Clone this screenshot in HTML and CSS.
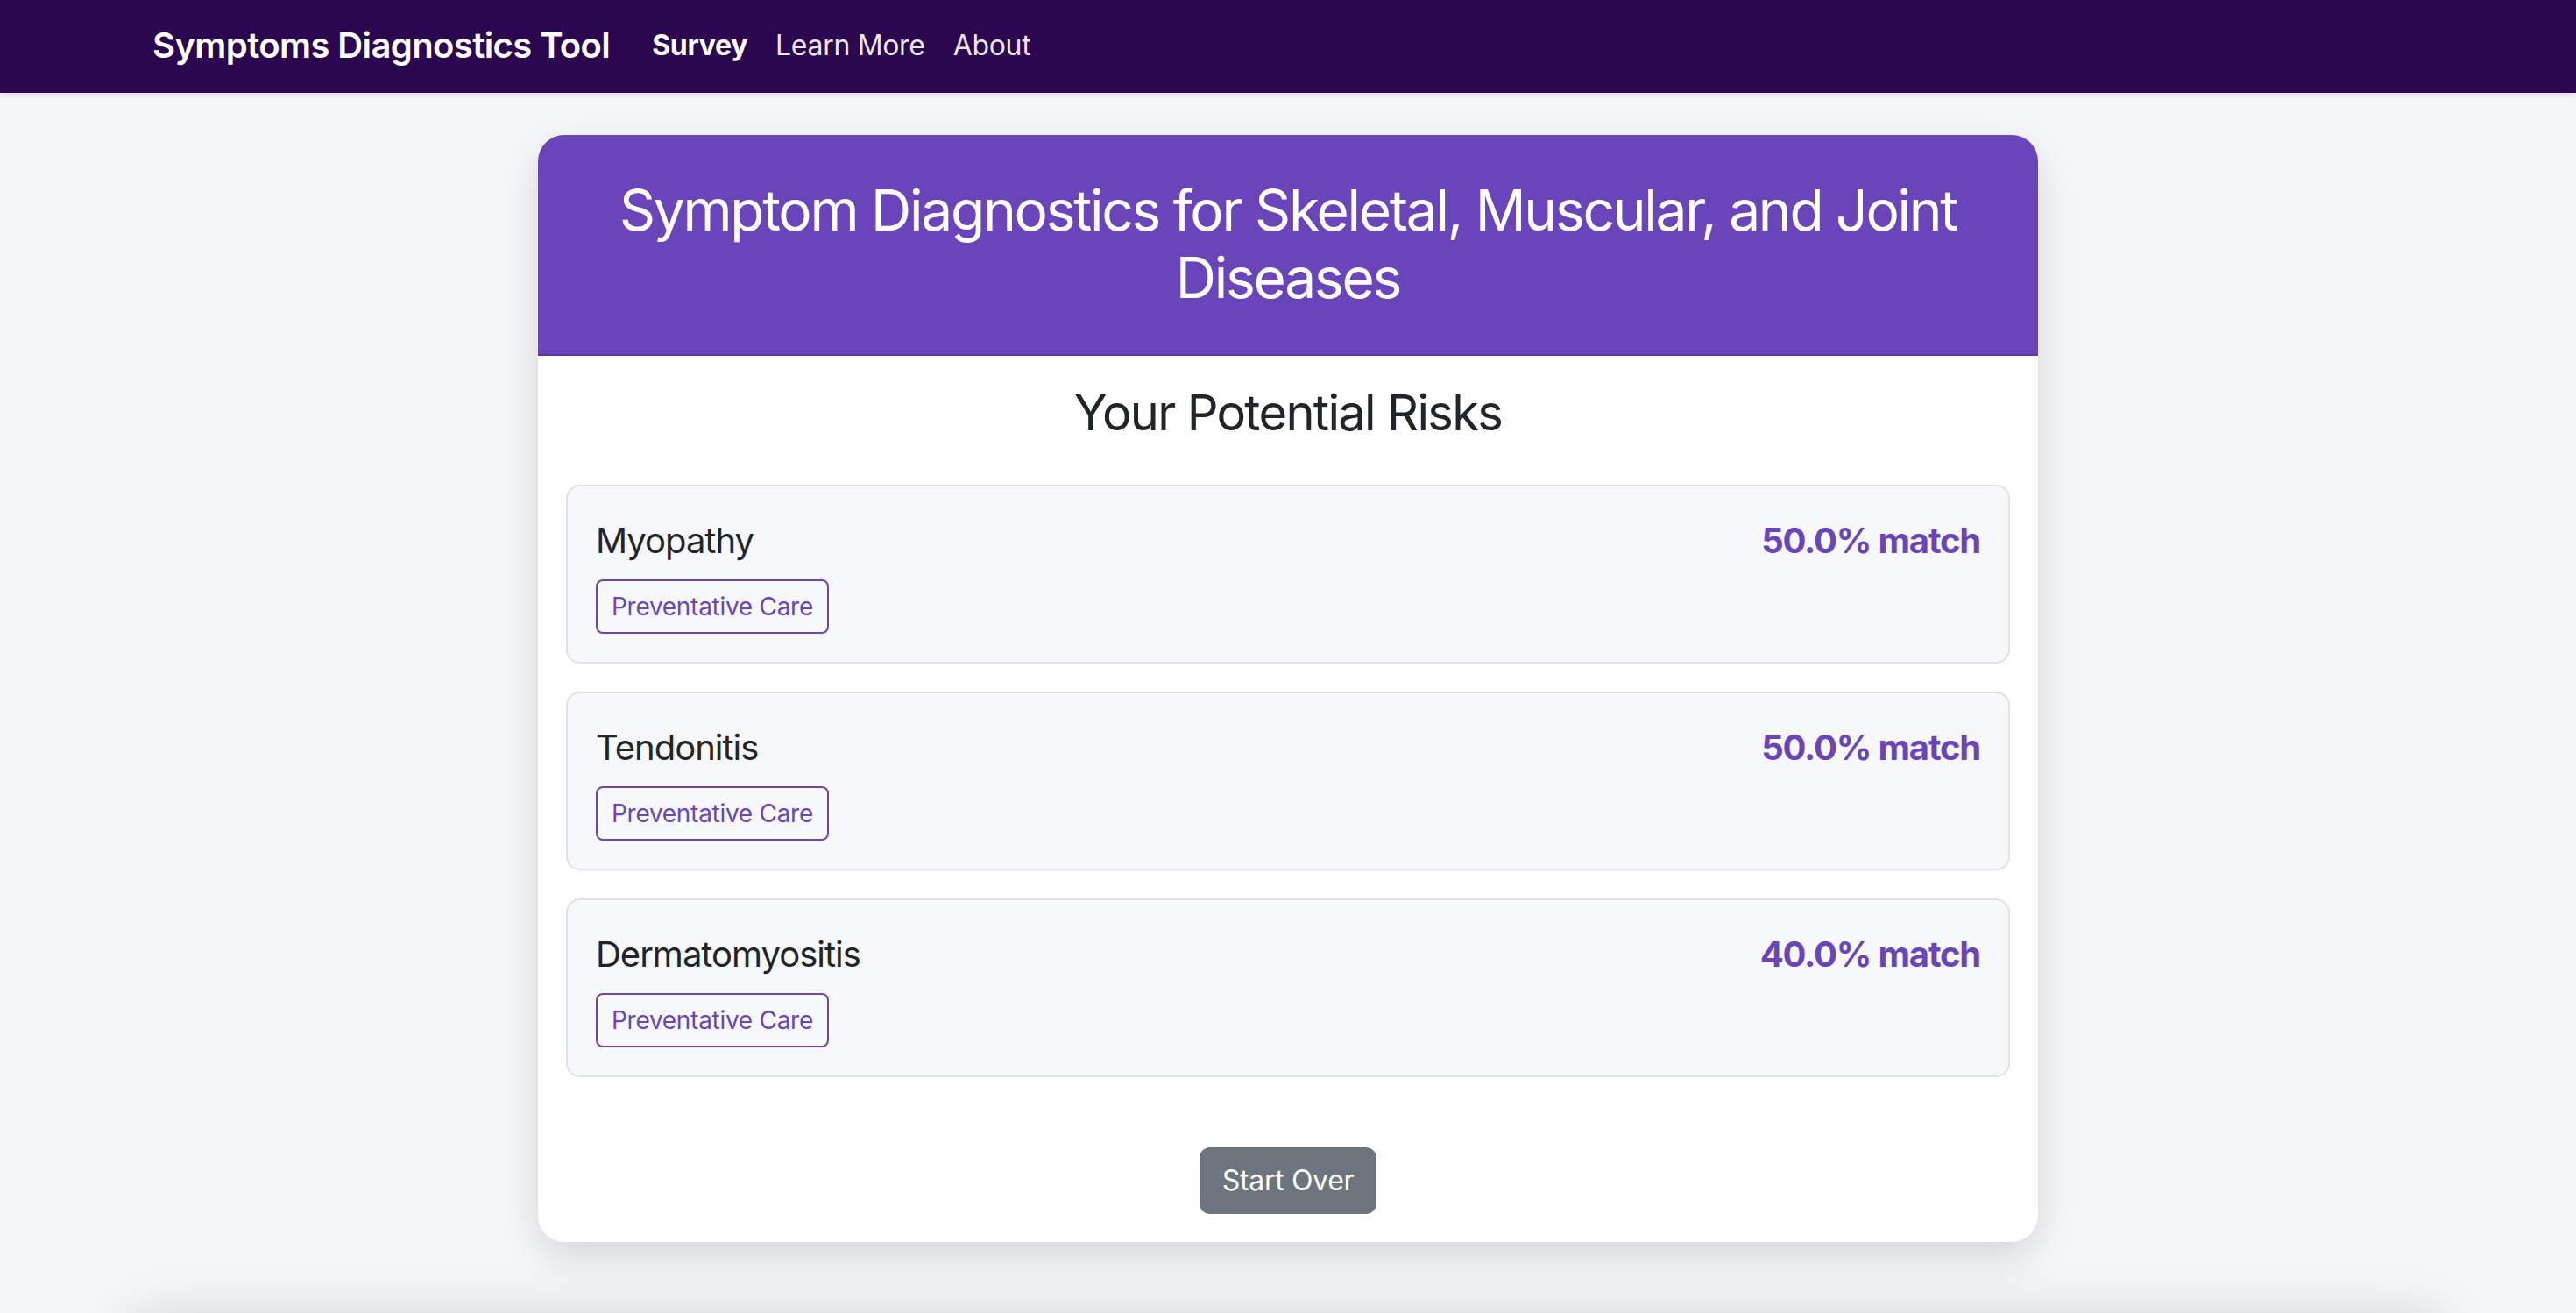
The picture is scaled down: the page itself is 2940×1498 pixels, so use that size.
FILE: index.html
```html
<!DOCTYPE html>
<html lang="en">
<head>
    <meta charset="UTF-8">
    <meta name="viewport" content="width=device-width, initial-scale=1.0">
    <title>Symptoms Diagnostics Tool</title>
    <link rel="stylesheet" href="styles.css">
</head>
<body>

    <nav class="topbar">
        <div class="topbar-inner">
            <a class="brand" href="#">Symptoms Diagnostics Tool</a>
            <ul class="nav-links">
                <li><a class="active" href="#">Survey</a></li>
                <li><a href="#">Learn More</a></li>
                <li><a href="#">About</a></li>
            </ul>
        </div>
    </nav>

    <main class="page">
        <section class="result-card">
            <header class="result-head">
                <h2>Symptom Diagnostics for Skeletal, Muscular, and Joint Diseases</h2>
            </header>
            <div class="result-body">
                <h3>Your Potential Risks</h3>

                <ul class="risk-list">
                    <li class="risk">
                        <div class="risk-info">
                            <h5>Myopathy</h5>
                            <button class="btn-outline">Preventative Care</button>
                        </div>
                        <span class="risk-match">50.0% match</span>
                    </li>
                    <li class="risk">
                        <div class="risk-info">
                            <h5>Tendonitis</h5>
                            <button class="btn-outline">Preventative Care</button>
                        </div>
                        <span class="risk-match">50.0% match</span>
                    </li>
                    <li class="risk">
                        <div class="risk-info">
                            <h5>Dermatomyositis</h5>
                            <button class="btn-outline">Preventative Care</button>
                        </div>
                        <span class="risk-match">40.0% match</span>
                    </li>
                </ul>

                <div class="actions">
                    <button class="btn-reset">Start Over</button>
                </div>
            </div>
        </section>
    </main>

    <footer class="site-footer"></footer>

</body>
</html>
```

FILE: styles.css
```css
body {
    font-family: Inter, 'Noto Sans', sans-serif;
    background-color: #f6f7f9;
    color: #212529;
    margin: 0;
    padding: 0;
    font-size: 32px;
    letter-spacing: -0.01em;
}
.topbar {
    background-color: #2a074e;
    height: 106px;
    box-shadow: 0 2px 8px rgba(0, 0, 0, 0.12);
}
.topbar-inner {
    width: 2640px;
    margin: 0 auto;
    padding: 0 24px 4px;
    box-sizing: border-box;
    height: 100%;
    display: flex;
    align-items: center;
}
.brand {
    color: white;
    text-decoration: none;
    font-size: 40px;
    font-weight: 600;
    letter-spacing: -0.015em;
    margin-right: 32px;
}
.nav-links {
    list-style: none;
    display: flex;
    margin: 0;
    padding: 0;
}
.nav-links a {
    display: block;
    padding: 0 16px;
    color: rgba(255, 255, 255, 0.92);
    text-decoration: none;
    font-size: 32px;
}
.nav-links a.active {
    color: white;
    font-weight: 700;
}
.page {
    padding-top: 48px;
}
.result-card {
    width: 1712px;
    margin: 0 auto;
    background-color: white;
    border-radius: 30px;
    overflow: hidden;
    box-shadow: 0 16px 48px rgba(0, 0, 0, 0.14);
}
.result-head {
    background-color: #6a45b9;
    border-bottom: 2px solid #5b38a3;
    padding: 48px 40px;
    text-align: center;
    color: white;
}
.result-head h2 {
    margin: 0;
    font-size: 64px;
    font-weight: 400;
    line-height: 1.2;
    letter-spacing: -0.035em;
}
.result-body {
    padding: 32px;
}
.result-body h3 {
    margin: 0 0 48px;
    text-align: center;
    font-size: 56px;
    font-weight: 400;
    line-height: 1.2;
    letter-spacing: -0.03em;
}
.risk-list {
    list-style: none;
    margin: 0;
    padding: 0;
}
.risk {
    display: flex;
    justify-content: space-between;
    align-items: flex-start;
    background-color: #f7f8fa;
    border: 2px solid #dfe2e6;
    border-radius: 16px;
    padding: 32px;
    margin-bottom: 32px;
}
.risk h5 {
    margin: 0 0 14px;
    font-size: 40px;
    font-weight: 400;
    line-height: 1.5;
    letter-spacing: -0.025em;
}
.risk-match {
    color: #6a45b9;
    font-size: 40px;
    font-weight: 700;
    line-height: 1.5;
    letter-spacing: -0.03em;
}
.btn-outline {
    font-family: inherit;
    font-size: 28px;
    line-height: 1.5;
    letter-spacing: -0.01em;
    color: #6a45b9;
    background: transparent;
    border: 2px solid #6a45b9;
    border-radius: 8px;
    padding: 8px 16px;
    cursor: pointer;
}
.actions {
    text-align: center;
    padding-top: 48px;
}
.btn-reset {
    font-family: inherit;
    font-size: 32px;
    line-height: 1.5;
    letter-spacing: -0.01em;
    color: white;
    background-color: #6c757d;
    border: 2px solid #6c757d;
    border-radius: 12px;
    padding: 12px 24px;
    cursor: pointer;
}
.site-footer {
    width: 2640px;
    height: 120px;
    margin: 90px auto 0;
    background-color: #f6f7f9;
    box-shadow: 0 0 70px rgba(0, 0, 0, 0.18);
}
```
